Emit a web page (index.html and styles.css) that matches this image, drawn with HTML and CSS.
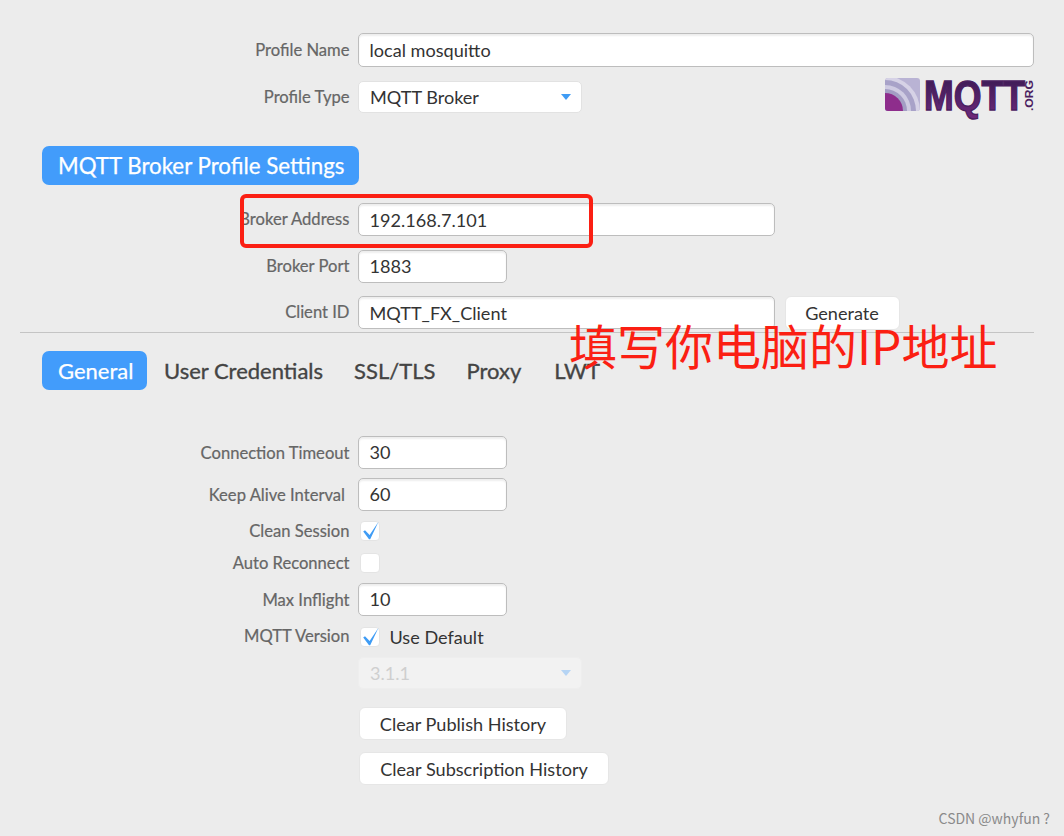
FILE: index.html
```html
<!DOCTYPE html>
<html lang="en">
<head>
<meta charset="utf-8">
<title>MQTT Broker Profile</title>
<link rel="stylesheet" href="styles.css">
</head>
<body>
<main class="page">
  <section class="top">
    <div class="row r-name"><label class="lbl">Profile Name</label><div class="input w-full">local mosquitto</div></div>
    <div class="row r-type">
      <label class="lbl">Profile Type</label>
      <div class="select"><span>MQTT Broker</span><i class="caret"></i></div>
      <svg class="logo" viewBox="0 0 149 36" width="149" height="36" aria-label="MQTT.org">
        <defs>
          <linearGradient id="mg" x1="0" y1="0" x2="0" y2="1"><stop offset="0" stop-color="#34184e"/><stop offset="1" stop-color="#6f2a7c"/></linearGradient>
          <clipPath id="sq"><rect x="0" y="1" width="35" height="33" rx="3"/></clipPath>
        </defs>
        <g clip-path="url(#sq)">
          <rect x="0" y="1" width="35" height="33" fill="#b9b3d4"/>
          <circle cx="0" cy="34" r="35" fill="#d6d2e6"/>
          <circle cx="0" cy="34" r="31" fill="#a8a2c8"/>
          <circle cx="0" cy="34" r="26" fill="#cfcbe2"/>
          <circle cx="0" cy="34" r="22" fill="#a39dc4"/>
          <circle cx="0" cy="34" r="18" fill="#8e2d8c"/>
        </g>
        <text class="logo-t" x="39" y="33" fill="url(#mg)" textLength="101" lengthAdjust="spacingAndGlyphs">MQTT</text>
        <text class="logo-o" transform="translate(148 34) rotate(-90)" fill="#4a2060" textLength="31" lengthAdjust="spacingAndGlyphs">.ORG</text>
      </svg>
    </div>
    <div class="section-head"><h2 class="pill pill-lg">MQTT Broker Profile Settings</h2></div>
    <div class="row r-addr"><label class="lbl lbl-up">Broker Address</label><div class="input w-md">192.168.7.101</div></div>
    <div class="row r-port"><label class="lbl lbl-up">Broker Port</label><div class="input w-sm">1883</div></div>
    <div class="row r-client"><label class="lbl lbl-up">Client ID</label><div class="input w-md">MQTT_FX_Client</div><button class="btn btn-gen">Generate</button></div>
  </section>

  <nav class="tabs">
    <span class="pill tab-on">General</span>
    <span class="tab t-user">User Credentials</span>
    <span class="tab t-ssl">SSL/TLS</span>
    <span class="tab t-proxy">Proxy</span>
    <span class="tab t-lwt">LWT</span>
  </nav>

  <section class="general">
    <div class="row"><label class="lbl">Connection Timeout</label><div class="input w-sm">30</div></div>
    <div class="row r-keep"><label class="lbl lbl-keep">Keep Alive Interval</label><div class="input w-sm">60</div></div>
    <div class="row r-check r-clean"><label class="lbl">Clean Session</label><span class="check"><svg viewBox="0 0 20 20" width="20" height="20"><path d="M3.2 10.6 L5 9.2 L9.6 14 L18.5 0.8 L10.2 18.2 L9 18.2 Z" fill="#3f9cf5"/></svg></span></div>
    <div class="row r-check r-auto"><label class="lbl">Auto Reconnect</label><span class="check"></span></div>
    <div class="row r-max"><label class="lbl">Max Inflight</label><div class="input w-sm">10</div></div>
    <div class="row r-check r-ver"><label class="lbl lbl-up">MQTT Version</label><span class="check"><svg viewBox="0 0 20 20" width="20" height="20"><path d="M3.2 10.6 L5 9.2 L9.6 14 L18.5 0.8 L10.2 18.2 L9 18.2 Z" fill="#3f9cf5"/></svg></span><span class="check-text">Use Default</span></div>
    <div class="row r-dis"><span class="lbl"></span><div class="select disabled"><span>3.1.1</span><i class="caret"></i></div></div>
    <div class="row r-clear1"><span class="lbl"></span><button class="btn btn-clear">Clear Publish History</button></div>
    <div class="row r-clear2"><span class="lbl"></span><button class="btn btn-clear">Clear Subscription History</button></div>
  </section>

  <div class="red-box"></div>
  <div class="note">填写你电脑的IP地址</div>
  <div class="mark">CSDN @whyfun ?</div>
</main>
</body>
</html>
```
FILE: styles.css
```css
* { box-sizing: border-box; }
html, body { margin: 0; padding: 0; }
body { background: #ececec; font-family: Lato, "Noto Sans", sans-serif; color: #333; }
.page { position: relative; width: 1064px; height: 836px; overflow: hidden; padding-top: 33px; }

.row { display: flex; align-items: center; height: 33px; }
.lbl { width: 358px; padding-right: 8.5px; text-align: right; font-size: 16.6px; color: #666; flex: none; -webkit-text-stroke: 0.2px #666; }
.lbl-up { margin-top: -2px; }
.lbl-keep { padding-right: 13px; }

.input { height: 100%; background: #fff; border: 1.5px solid #bdbdbd; border-radius: 5px; padding-left: 10.5px; font-size: 18.1px; line-height: 32px; color: #333; box-shadow: inset 0 2px 2px #eee; flex: none; }
.w-full { width: 676px; }
.w-md { width: 417px; }
.w-sm { width: 149px; line-height: 30px; }

.r-name { height: 34px; }
.r-type { height: 32px; margin-top: 14px; position: relative; justify-content: flex-start; }
.select { width: 224px; height: 32px; background: #fff; border: 1px solid #e2e2e2; border-radius: 5px; padding: 0 11px; display: flex; align-items: center; justify-content: space-between; font-size: 18.1px; flex: none; }
.caret { width: 0; height: 0; border-left: 5.5px solid transparent; border-right: 5.5px solid transparent; border-top: 6px solid #3f9cf5; margin-right: -1px; }
.select.disabled { background: #f2f2f2; color: #cfcfcf; border-color: #eee; }
.select.disabled .caret { border-top-color: #b5d4f4; }
.logo { margin-left: 303px; margin-top: -4px; flex: none; overflow: visible; }
.logo-t { font: 900 43px "Liberation Sans", sans-serif; stroke: #4a2060; stroke-width: 1.4px; }
.logo-o { font: 700 11px "Liberation Sans", sans-serif; }

.section-head { margin: 33px 0 0 42px; }
.pill { background: #429cfb; color: #fff; border-radius: 7px; display: inline-block; }
.pill-lg { margin: 0; width: 317px; height: 39px; line-height: 39px; padding-left: 16px; font-size: 22.3px; font-weight: 400; -webkit-text-stroke: 0.25px #fff; }
.r-addr { margin-top: 18px; }
.r-port { margin-top: 14px; }
.r-client { margin-top: 13px; }
.btn { background: #fff; border: 1px solid #e6e6e6; border-radius: 6px; font-family: inherit; font-size: 18.1px; color: #333; height: 33px; padding: 0; flex: none; }
.btn-gen { width: 115px; margin-left: 9.5px; margin-top: 0; height: 34px; }

.tabs { margin-top: 3px; border-top: 1px solid #c4c4c4; margin-left: 20px; width: 1014px; padding: 18px 0 0 22px; display: flex; align-items: center; height: 58px; font-size: 22px; }
.tab-on { width: 105px; height: 39px; line-height: 39px; padding-left: 16px; -webkit-text-stroke: 0.25px #fff; }
.tab { color: #444; -webkit-text-stroke: 0.35px #444; }
.t-user { margin-left: 17px; }
.t-ssl { margin-left: 31px; }
.t-proxy { margin-left: 31px; }
.t-lwt { margin-left: 33px; }

.general { margin-top: 46px; }
.r-keep { margin-top: 9px; }
.r-check { height: 20px; }
.r-clean { margin-top: 10px; }
.r-auto { margin-top: 12px; }
.r-max { margin-top: 10px; }
.r-ver { margin-top: 11px; }
.check { width: 20px; height: 20px; margin-left: 2px; background: #fff; border: 1px solid #e4e4e4; border-radius: 4px; display: block; flex: none; position: relative; }
.check svg { position: absolute; left: -1px; top: -1px; overflow: visible; }
.check-text { margin-left: 9.5px; font-size: 18.1px; }
.r-dis { margin-top: 10px; height: 32px; }
.r-dis .select { height: 32px; }
.r-clear1 { margin-top: 18px; }
.r-clear2 { margin-top: 12px; }
.btn-clear { margin-left: 1px; }
.r-clear1 .btn-clear { width: 208px; }
.r-clear2 .btn-clear { width: 250px; }

.red-box { position: absolute; left: 240px; top: 194px; width: 353px; height: 54px; border: 4px solid #fb1f13; border-radius: 6px; }
.note { position: absolute; left: 569px; top: 314px; font-family: "Noto Sans CJK SC", "Noto Sans", sans-serif; font-size: 48px; line-height: 60px; color: #fb1f13; white-space: nowrap; }
.mark { position: absolute; right: 14px; top: 808px; font-family: "Noto Sans CJK SC", sans-serif; font-size: 14px; color: #8a8a8a; }
```
